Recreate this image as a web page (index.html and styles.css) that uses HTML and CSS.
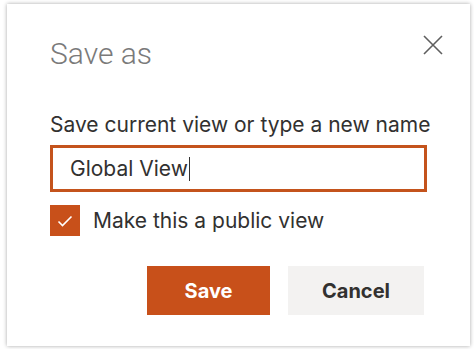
FILE: index.html
```html
<!DOCTYPE html>
<html lang="en">
<head>
  <meta charset="UTF-8">
  <title>Save as</title>
  <link rel="stylesheet" href="styles.css">
</head>
<body>

<div class="dialog">
  <div class="dialog-header">
    <h2 class="dialog-title">Save as</h2>
    <button class="close-btn" aria-label="Close">
      <svg width="20" height="20" viewBox="0 0 20 20">
        <path d="M1 1 L19 19 M19 1 L1 19" stroke="#5f5f5f" stroke-width="1.6" fill="none"/>
      </svg>
    </button>
  </div>

  <label class="field-label" for="viewName">Save current view or type a new name</label>
  <div class="name-input">
    <span class="name-value">Global View</span><span class="caret"></span>
  </div>

  <div class="check-row">
    <span class="checkbox">
      <svg width="16" height="12" viewBox="0 0 16 12">
        <path d="M1.5 6.5 L5.5 10.5 L14.5 1.5" stroke="#fff" stroke-width="1.6" fill="none"/>
      </svg>
    </span>
    <span class="check-label">Make this a public view</span>
  </div>

  <div class="actions">
    <button class="btn primary">Save</button>
    <button class="btn">Cancel</button>
  </div>
</div>

</body>
</html>
```

FILE: styles.css
```css
body {
  margin: 0;
  background: #fff;
  font-family: Inter, "Open Sans", sans-serif;
  color: #323130;
}

.dialog {
  margin: 4px 4px 3px 7px;
  height: 342px;
  box-sizing: border-box;
  background: #fff;
  box-shadow: 0 0 4px rgba(0, 0, 0, 0.35);
  padding: 30px 27px 0 43px;
}

.dialog-header {
  display: flex;
  justify-content: space-between;
  align-items: flex-start;
}

.dialog-title {
  margin: 0;
  font-family: Roboto, "Open Sans", sans-serif;
  font-weight: 300;
  font-size: 30px;
  line-height: 40px;
  color: #7a7a7a;
}

.close-btn {
  border: none;
  background: none;
  padding: 0;
  margin-top: 1px;
  cursor: pointer;
}

.field-label {
  display: block;
  margin-top: 37px;
  font-size: 21px;
  line-height: 28px;
}

.name-input {
  margin-top: 6px;
  width: 377px;
  height: 47px;
  box-sizing: border-box;
  border: 3px solid #c4531c;
  padding: 0 0 0 17px;
  display: flex;
  align-items: center;
  font-size: 21px;
}

.caret {
  display: inline-block;
  width: 1px;
  height: 24px;
  background: #333;
  margin-left: 1px;
}

.check-row {
  display: flex;
  align-items: center;
  margin-top: 13px;
}

.checkbox {
  width: 30px;
  height: 31px;
  background: #c8501a;
  display: flex;
  align-items: center;
  justify-content: center;
}

.check-label {
  margin-left: 13px;
  font-size: 21px;
}

.actions {
  display: flex;
  margin-top: 30px;
  padding-left: 97px;
  gap: 18px;
}

.btn {
  height: 49px;
  border: none;
  background: #f3f2f1;
  color: #323130;
  font-family: Inter, "Open Sans", sans-serif;
  font-size: 20px;
  font-weight: 700;
  width: 136px;
  cursor: pointer;
}

.btn.primary {
  width: 123px;
  background: #c8501a;
  color: #fff;
}
```
